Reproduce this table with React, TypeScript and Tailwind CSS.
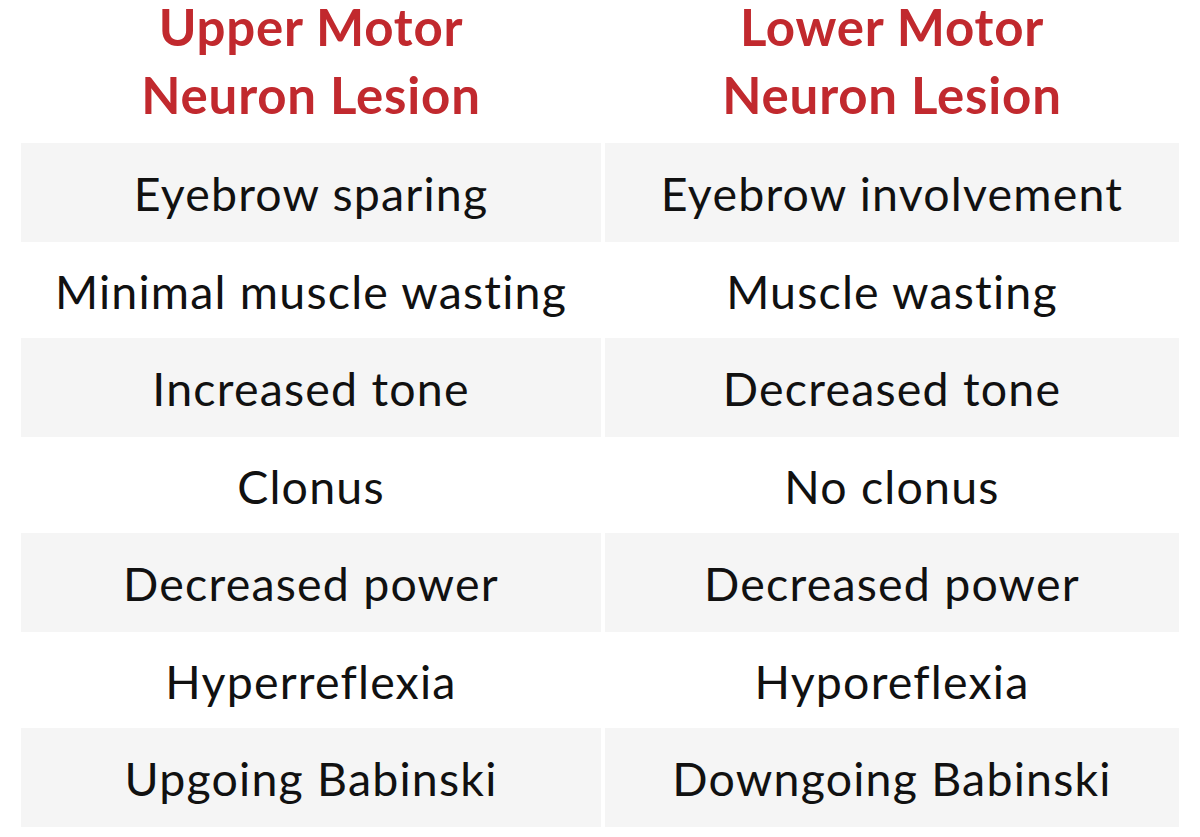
const rows = [
  ["Eyebrow sparing", "Eyebrow involvement"],
  ["Minimal muscle wasting", "Muscle wasting"],
  ["Increased tone", "Decreased tone"],
  ["Clonus", "No clonus"],
  ["Decreased power", "Decreased power"],
  ["Hyperreflexia", "Hyporeflexia"],
  ["Upgoing Babinski", "Downgoing Babinski"]
];

export default function App() {
  return (
    <div className="h-[837px] w-[1200px] overflow-hidden bg-white px-[21px] font-['Lato',sans-serif] [font-variant-ligatures:none]">
      <div className="grid grid-cols-[580px_574px] gap-x-[4px]">
        <Heading top="Upper Motor" bottom="Neuron Lesion" />
        <Heading top="Lower Motor" bottom="Neuron Lesion" />
        {rows.map(([upper, lower], i) => (
          <Row key={upper} upper={upper} lower={lower} shaded={i % 2 === 0} />
        ))}
      </div>
    </div>
  );
}

function Heading({ top, bottom }: { top: string; bottom: string }) {
  return (
    <div className="h-[143px] text-center text-[51px] font-bold leading-[53px] tracking-[0.8px] text-[#c1292e]">
      <div>{top}</div>
      <div className="mt-[15px]">{bottom}</div>
    </div>
  );
}

function Row({ upper, lower, shaded }: { upper: string; lower: string; shaded: boolean }) {
  const cell = shaded
    ? "flex h-[99px] items-center justify-center bg-[#f5f5f5]"
    : "flex h-[96px] items-center justify-center bg-white";
  return (
    <>
      <div className={cell}>
        <span className="pt-[2px] text-[46.5px] leading-none tracking-[1.2px] text-[#111]">{upper}</span>
      </div>
      <div className={cell}>
        <span className="pt-[2px] text-[46.5px] leading-none tracking-[1.2px] text-[#111]">{lower}</span>
      </div>
    </>
  );
}
